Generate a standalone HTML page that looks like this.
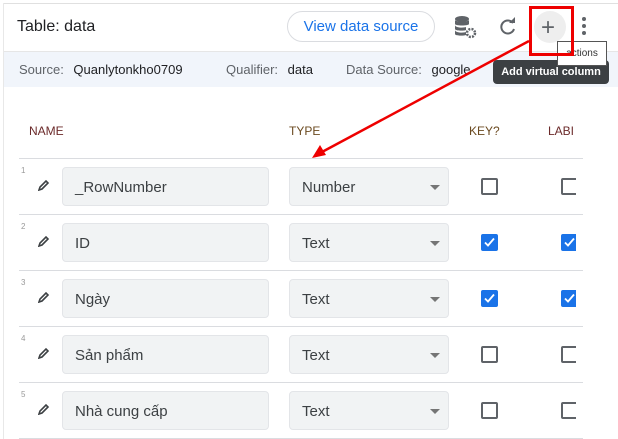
<!DOCTYPE html><html><head><style>
body{margin:0;width:618px;height:439px;background:#fff;font-family:"Liberation Sans",sans-serif;position:relative;overflow:hidden}
.a{position:absolute}
.inp{position:absolute;background:#f1f3f4;border:1px solid #e3e5e8;border-radius:4px;height:39px;box-sizing:border-box;font-size:15px;color:#3c4043;line-height:39px;padding-left:12px}
.cb{position:absolute;width:17px;height:17px;box-sizing:border-box;border:2px solid #5f6368;border-radius:2px}
.cb.on{background:#1a73e8;border-color:#1a73e8}
.line{position:absolute;left:19px;width:564px;height:1px;background:#dadce0}
.num{position:absolute;left:21px;font-size:8px;color:#999}
</style></head><body>
<div class="a" style="left:3px;top:3px;width:615px;height:1px;background:#e0e0e0"></div>
<div class="a" style="left:3px;top:3px;width:1px;height:436px;background:#e8e8e8"></div>
<div class="a" style="left:17px;top:18px;font-size:16px;color:#202124">Table: data</div>
<div class="a" style="left:287px;top:11px;width:148px;height:31px;border:1px solid #dadce0;border-radius:16px;box-sizing:border-box;color:#1a73e8;font-size:15px;line-height:29px;text-align:center">View data source</div>
<svg class="a" style="left:452px;top:14px" width="26" height="26" viewBox="0 0 26 26"><ellipse cx="10" cy="5" rx="7" ry="3" fill="#5f6368"/><path d="M3 6v4c0 2 14 2 14 0V6c0 2-14 2-14 0zM3 11v4c0 2 10 2 11 1v-3c-2 1-11 1-11-2zM3 16v4c0 2 9 2 11 1v-3c-2 1-11 1-11-2z" fill="#5f6368"/><circle cx="19" cy="19" r="4" fill="none" stroke="#5f6368" stroke-width="2.5" stroke-dasharray="2 1.2"/></svg>
<svg class="a" style="left:498px;top:17px" width="20" height="20" viewBox="0 0 20 20"><path d="M15 6A6.5 6.5 0 1 0 16 12" fill="none" stroke="#5f6368" stroke-width="2"/><path d="M11 6h6V0z" fill="#5f6368"/></svg>
<div class="a" style="left:534px;top:11px;width:32px;height:32px;border-radius:50%;background:#eeeeee"></div>
<div class="a" style="left:541px;top:12px;font-size:24px;color:#5f6368;line-height:32px">+</div>
<div class="a" style="left:582px;top:17px;width:4px;height:4px;border-radius:2px;background:#5f6368;box-shadow:0 7px 0 #5f6368,0 14px 0 #5f6368"></div>
<div class="a" style="left:4px;top:51px;width:614px;height:1px;background:#e6e6e6"></div>
<div class="a" style="left:4px;top:52px;width:614px;height:35px;background:#f1f5fb"></div>
<div class="a" style="left:19px;top:62px;font-size:13px;color:#5f6368">Source: <span style="color:#202124;margin-left:6px">Quanlytonkho0709</span></div>
<div class="a" style="left:226px;top:62px;font-size:13px;color:#5f6368">Qualifier: <span style="color:#202124;margin-left:6px">data</span></div>
<div class="a" style="left:346px;top:62px;font-size:13px;color:#5f6368">Data Source: <span style="color:#202124;margin-left:6px">google</span></div>
<div class="a" style="left:493px;top:60px;width:116px;height:24px;background:#3c4043;border-radius:4px;color:#fff;font-size:11px;font-weight:bold;line-height:24px;text-align:center">Add virtual column</div>
<div class="a" style="left:557px;top:41px;width:50px;height:25px;background:#fff;border:1px solid #555;box-sizing:border-box;font-size:10px;color:#333;line-height:23px;text-align:center">actions</div>
<div class="a" style="left:529px;top:6px;width:45px;height:50px;border:3px solid #e00;box-sizing:border-box"></div>
<div class="a" style="left:29px;top:124px;font-size:12px;color:#6b2a2a">NAME</div>
<div class="a" style="left:289px;top:124px;font-size:12px;color:#6b4a20">TYPE</div>
<div class="a" style="left:469px;top:124px;font-size:12px;color:#6b4a20">KEY?</div>
<div class="a" style="left:548px;top:124px;font-size:12px;color:#6b2a2a">LABI</div>
<div class="line" style="top:158px"></div>
<div id="rows"></div>
<script>
var d=[["_RowNumber","Number",0],["ID","Text",1],["Ngày","Text",1],["Sản phẩm","Text",0],["Nhà cung cấp","Text",0]],h="";
d.forEach(function(r,i){var y=167+i*56;
h+='<div class="num" style="top:'+(y-1)+'px">'+(i+1)+'</div>';
h+='<svg class="a" style="left:38px;top:'+(y+12)+'px" width="12" height="12" viewBox="0 0 12 12"><path d="M1 11l1-3 6-6 2 2-6 6z" fill="none" stroke="#3c4043" stroke-width="1.6"/></svg>';
h+='<div class="inp" style="left:62px;top:'+y+'px;width:207px">'+r[0]+'</div>';
h+='<div class="inp" style="left:289px;top:'+y+'px;width:160px">'+r[1]+'<span style="position:absolute;right:8px;top:17px;border:5px solid transparent;border-top-color:#757575;border-bottom:0"></span></div>';
var c=r[2]?' on':'';var ck=r[2]?'<svg width="13" height="13" viewBox="0 0 13 13" style="position:absolute;left:0;top:0"><path d="M2 6.5l3 3 6-7" fill="none" stroke="#fff" stroke-width="1.8"/></svg>':'';
h+='<div class="cb'+c+'" style="left:481px;top:'+(y+11)+'px">'+ck+'</div>';
h+='<div style="position:absolute;left:561px;top:'+(y+11)+'px;width:15px;height:18px;overflow:hidden"><div class="cb'+c+'" style="left:0;top:0">'+ck+'</div></div>';
h+='<div class="line" style="top:'+(y+47)+'px"></div>';});
document.getElementById('rows').innerHTML=h;
</script>
<svg class="a" style="left:0;top:0" width="618" height="439"><line x1="529" y1="41" x2="322" y2="152" stroke="#e00" stroke-width="2.5"/><path d="M312 158l8-13 6 10z" fill="#e00"/></svg>
</body></html>
